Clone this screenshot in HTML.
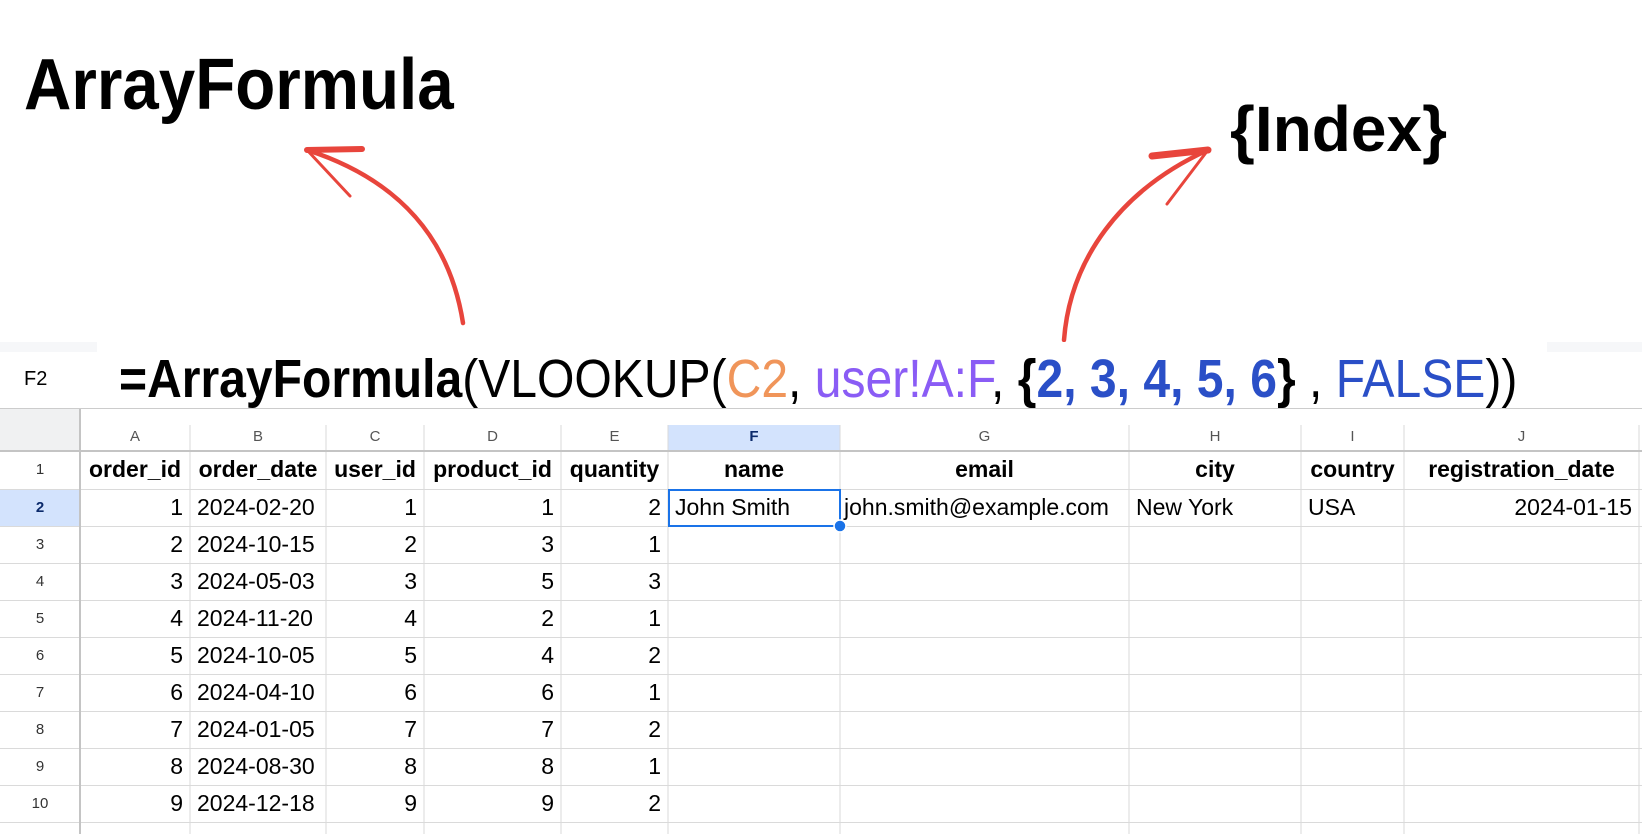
<!DOCTYPE html>
<html><head><meta charset="utf-8"><style>
*{margin:0;padding:0;box-sizing:border-box}
body{width:1642px;height:834px;background:#fff;position:relative;overflow:hidden;font-family:"Liberation Sans",Arial,sans-serif}
.abs{position:absolute}
.t{position:absolute;font-weight:bold;color:#000;white-space:nowrap;transform-origin:0 0}
.cell{position:absolute;font-size:23px;color:#000;white-space:nowrap;line-height:37px;padding:0 7px;overflow:hidden}
.b{font-weight:bold;text-align:center}
.r{text-align:right}
.ch{position:absolute;font-size:15px;color:#555;text-align:center;line-height:24px}
.rh{position:absolute;font-size:15px;color:#333;text-align:center;width:80px;line-height:37px}
</style></head><body>
<div class="t" style="left:24px;top:44px;font-size:72px;transform:scaleX(0.91)">ArrayFormula</div>
<div class="t" style="left:1230px;top:92px;font-size:64px;transform:scaleX(1.0)">{Index}</div>

<svg class="abs" style="left:0;top:0" width="1642" height="360" fill="none" stroke="#e8453c" stroke-linecap="round">
<path d="M463 323 C450 240 400 180 307 150" stroke-width="4.5"/>
<path d="M307 150 L362 149" stroke-width="6"/>
<path d="M307 150 L350 196" stroke-width="3"/>
<path d="M1064 340 C1070 260 1120 190 1208 150" stroke-width="4.5"/>
<path d="M1208 150 L1152 156" stroke-width="7"/>
<path d="M1208 150 L1167 204" stroke-width="3"/>
</svg>

<div class="abs" style="left:0;top:342px;width:1642px;height:10px;background:#f6f7f9"></div>
<div class="abs" style="left:0;top:352px;width:1642px;height:56px;background:#fff"></div>
<div class="abs" style="left:0;top:408px;width:1642px;height:1px;background:#ccc"></div>
<div class="abs" style="left:24px;top:368px;font-size:20px;color:#000">F2</div>
<div class="abs" style="left:97px;top:342px;width:1450px;height:66px;background:#fff"></div>
<div class="t" style="left:119px;top:350px;font-size:54px;font-weight:normal;transform:scaleX(0.89);line-height:58px"><b>=ArrayFormula</b>(VLOOKUP(<span style="color:#f0955a">C2</span>, <span style="color:#8a5cf5">user!A:F</span>, <b>{<span style="color:#2a4fc7">2, 3, 4, 5, 6</span>}</b> , <span style="color:#2a4fc7">FALSE</span>))</div>

<div class="abs" style="left:0;top:409px;width:1642px;height:425px">
<svg class="abs" style="left:0;top:0" width="1642" height="425">
<rect x="0" y="0" width="80" height="42" fill="#f0f1f2"/>
<rect x="668" y="16" width="172" height="26" fill="#d3e3fd"/>
<rect x="0" y="80" width="80" height="37" fill="#d3e3fd"/>
<g stroke="#dadada" stroke-width="1">
<line x1="80" y1="16" x2="80" y2="425"/>
<line x1="190" y1="16" x2="190" y2="425"/>
<line x1="326" y1="16" x2="326" y2="425"/>
<line x1="424" y1="16" x2="424" y2="425"/>
<line x1="561" y1="16" x2="561" y2="425"/>
<line x1="668" y1="16" x2="668" y2="425"/>
<line x1="840" y1="16" x2="840" y2="425"/>
<line x1="1129" y1="16" x2="1129" y2="425"/>
<line x1="1301" y1="16" x2="1301" y2="425"/>
<line x1="1404" y1="16" x2="1404" y2="425"/>
<line x1="1639" y1="16" x2="1639" y2="425"/>
<line x1="0" y1="80.5" x2="1642" y2="80.5"/>
<line x1="0" y1="117.5" x2="1642" y2="117.5"/>
<line x1="0" y1="154.5" x2="1642" y2="154.5"/>
<line x1="0" y1="191.5" x2="1642" y2="191.5"/>
<line x1="0" y1="228.5" x2="1642" y2="228.5"/>
<line x1="0" y1="265.5" x2="1642" y2="265.5"/>
<line x1="0" y1="302.5" x2="1642" y2="302.5"/>
<line x1="0" y1="339.5" x2="1642" y2="339.5"/>
<line x1="0" y1="376.5" x2="1642" y2="376.5"/>
<line x1="0" y1="413.5" x2="1642" y2="413.5"/>
</g>
<line x1="0" y1="42" x2="1642" y2="42" stroke="#c4c4c4" stroke-width="2"/>
<line x1="80" y1="0" x2="80" y2="425" stroke="#c4c4c4" stroke-width="2"/>
<rect x="669" y="81" width="171" height="36" fill="none" stroke="#1a73e8" stroke-width="2"/>
<circle cx="840" cy="117" r="6" fill="#1a73e8" stroke="#fff" stroke-width="1.5"/>
</svg>
<div class="ch" style="left:80px;top:16px;width:110px">A</div>
<div class="ch" style="left:190px;top:16px;width:136px">B</div>
<div class="ch" style="left:326px;top:16px;width:98px">C</div>
<div class="ch" style="left:424px;top:16px;width:137px">D</div>
<div class="ch" style="left:561px;top:16px;width:107px">E</div>
<div class="ch" style="left:668px;top:16px;width:172px;color:#0b2a6b;font-weight:bold">F</div>
<div class="ch" style="left:840px;top:16px;width:289px">G</div>
<div class="ch" style="left:1129px;top:16px;width:172px">H</div>
<div class="ch" style="left:1301px;top:16px;width:103px">I</div>
<div class="ch" style="left:1404px;top:16px;width:235px">J</div>

<div class="rh" style="top:42px">1</div>
<div class="rh" style="top:80px;font-weight:bold;color:#0b2a6b">2</div>
<div class="rh" style="top:117px">3</div>
<div class="rh" style="top:154px">4</div>
<div class="rh" style="top:191px">5</div>
<div class="rh" style="top:228px">6</div>
<div class="rh" style="top:265px">7</div>
<div class="rh" style="top:302px">8</div>
<div class="rh" style="top:339px">9</div>
<div class="rh" style="top:376px">10</div>

<div class="cell b" style="left:80px;top:42px;width:110px;padding:0">order_id</div>
<div class="cell b" style="left:190px;top:42px;width:136px;padding:0">order_date</div>
<div class="cell b" style="left:326px;top:42px;width:98px;padding:0">user_id</div>
<div class="cell b" style="left:424px;top:42px;width:137px;padding:0">product_id</div>
<div class="cell b" style="left:561px;top:42px;width:107px;padding:0">quantity</div>
<div class="cell b" style="left:668px;top:42px;width:172px">name</div>
<div class="cell b" style="left:840px;top:42px;width:289px">email</div>
<div class="cell b" style="left:1129px;top:42px;width:172px">city</div>
<div class="cell b" style="left:1301px;top:42px;width:103px;padding:0">country</div>
<div class="cell b" style="left:1404px;top:42px;width:235px">registration_date</div>

<div class="cell" style="left:668px;top:80px;width:172px">John Smith</div>
<div class="cell" style="left:840px;top:80px;width:289px;padding:0 4px">john.smith@example.com</div>
<div class="cell" style="left:1129px;top:80px;width:172px">New York</div>
<div class="cell" style="left:1301px;top:80px;width:103px">USA</div>
<div class="cell r" style="left:1404px;top:80px;width:235px">2024-01-15</div>
</div>

<div class="abs" style="left:0;top:489px;width:1642px">
<div class="cell r" style="left:80px;top:0;width:110px">1</div><div class="cell" style="left:190px;top:0">2024-02-20</div><div class="cell r" style="left:326px;top:0;width:98px">1</div><div class="cell r" style="left:424px;top:0;width:137px">1</div><div class="cell r" style="left:561px;top:0;width:107px">2</div>
<div class="cell r" style="left:80px;top:37px;width:110px">2</div><div class="cell" style="left:190px;top:37px">2024-10-15</div><div class="cell r" style="left:326px;top:37px;width:98px">2</div><div class="cell r" style="left:424px;top:37px;width:137px">3</div><div class="cell r" style="left:561px;top:37px;width:107px">1</div>
<div class="cell r" style="left:80px;top:74px;width:110px">3</div><div class="cell" style="left:190px;top:74px">2024-05-03</div><div class="cell r" style="left:326px;top:74px;width:98px">3</div><div class="cell r" style="left:424px;top:74px;width:137px">5</div><div class="cell r" style="left:561px;top:74px;width:107px">3</div>
<div class="cell r" style="left:80px;top:111px;width:110px">4</div><div class="cell" style="left:190px;top:111px">2024-11-20</div><div class="cell r" style="left:326px;top:111px;width:98px">4</div><div class="cell r" style="left:424px;top:111px;width:137px">2</div><div class="cell r" style="left:561px;top:111px;width:107px">1</div>
<div class="cell r" style="left:80px;top:148px;width:110px">5</div><div class="cell" style="left:190px;top:148px">2024-10-05</div><div class="cell r" style="left:326px;top:148px;width:98px">5</div><div class="cell r" style="left:424px;top:148px;width:137px">4</div><div class="cell r" style="left:561px;top:148px;width:107px">2</div>
<div class="cell r" style="left:80px;top:185px;width:110px">6</div><div class="cell" style="left:190px;top:185px">2024-04-10</div><div class="cell r" style="left:326px;top:185px;width:98px">6</div><div class="cell r" style="left:424px;top:185px;width:137px">6</div><div class="cell r" style="left:561px;top:185px;width:107px">1</div>
<div class="cell r" style="left:80px;top:222px;width:110px">7</div><div class="cell" style="left:190px;top:222px">2024-01-05</div><div class="cell r" style="left:326px;top:222px;width:98px">7</div><div class="cell r" style="left:424px;top:222px;width:137px">7</div><div class="cell r" style="left:561px;top:222px;width:107px">2</div>
<div class="cell r" style="left:80px;top:259px;width:110px">8</div><div class="cell" style="left:190px;top:259px">2024-08-30</div><div class="cell r" style="left:326px;top:259px;width:98px">8</div><div class="cell r" style="left:424px;top:259px;width:137px">8</div><div class="cell r" style="left:561px;top:259px;width:107px">1</div>
<div class="cell r" style="left:80px;top:296px;width:110px">9</div><div class="cell" style="left:190px;top:296px">2024-12-18</div><div class="cell r" style="left:326px;top:296px;width:98px">9</div><div class="cell r" style="left:424px;top:296px;width:137px">9</div><div class="cell r" style="left:561px;top:296px;width:107px">2</div>
</div>
</body></html>
